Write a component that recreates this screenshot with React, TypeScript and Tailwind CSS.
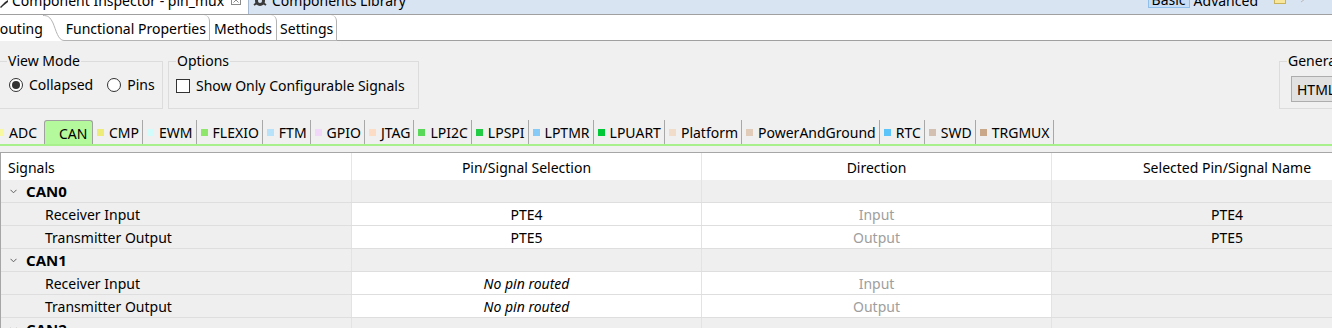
import React from "react";

type PeriphTab = { name: string; sq: string };

const periphTabs: PeriphTab[] = [
  { name: "CMP", sq: "bg-[#eeec78]" },
  { name: "EWM", sq: "bg-[#d2fcfc]" },
  { name: "FLEXIO", sq: "bg-[#8ee66a]" },
  { name: "FTM", sq: "bg-[#b8e2fa]" },
  { name: "GPIO", sq: "bg-[#f2d8f8]" },
  { name: "JTAG", sq: "bg-[#fcdcc4]" },
  { name: "LPI2C", sq: "bg-[#5ad85a]" },
  { name: "LPSPI", sq: "bg-[#22cc44]" },
  { name: "LPTMR", sq: "bg-[#86cbf7]" },
  { name: "LPUART", sq: "bg-[#00c837]" },
  { name: "Platform", sq: "bg-[#f0dcc8]" },
  { name: "PowerAndGround", sq: "bg-[#e0ccb8]" },
  { name: "RTC", sq: "bg-[#5cc4f8]" },
  { name: "SWD", sq: "bg-[#d4c0b0]" },
  { name: "TRGMUX", sq: "bg-[#c8a888]" },
];

type Row =
  | { kind: "group"; name: string }
  | { kind: "item"; signal: string; pin: string; routed: boolean; dir: string; sel: string };

const rows: Row[] = [
  { kind: "group", name: "CAN0" },
  { kind: "item", signal: "Receiver Input", pin: "PTE4", routed: true, dir: "Input", sel: "PTE4" },
  { kind: "item", signal: "Transmitter Output", pin: "PTE5", routed: true, dir: "Output", sel: "PTE5" },
  { kind: "group", name: "CAN1" },
  { kind: "item", signal: "Receiver Input", pin: "No pin routed", routed: false, dir: "Input", sel: "" },
  { kind: "item", signal: "Transmitter Output", pin: "No pin routed", routed: false, dir: "Output", sel: "" },
  { kind: "group", name: "CAN2" },
];

function TopStrip() {
  return (
    <div className="h-[15px] flex overflow-hidden border-b border-[#a0a0a0] bg-[#d9e4f2]">
      {/* active editor tab */}
      <div className="w-[249px] shrink-0 flex items-start bg-white border-r border-[#a7b9d1]">
        <svg width="9" height="14" viewBox="0 0 9 14" className="shrink-0">
          <path d="M0 7 L5 2 L8 0 L8 2 L3 6 L1 8 Z" fill="#2b2b2b" />
        </svg>
        <span className="ml-[3px] -mt-[6px] leading-[14px] whitespace-nowrap">
          Component Inspector - pin_mux
        </span>
        <svg width="10" height="10" viewBox="0 0 10 10" className="ml-auto mr-[7px] -mt-[5px] shrink-0">
          <rect x="0.5" y="0.5" width="9" height="9" fill="none" stroke="#8a8a8a" />
          <path d="M2.5 2.5 L7.5 7.5 M7.5 2.5 L2.5 7.5" stroke="#8a8a8a" />
        </svg>
      </div>

      {/* second view */}
      <div className="flex items-start pl-[4px]">
        <svg width="14" height="14" viewBox="0 0 14 14" className="-mt-[6px] shrink-0">
          <circle cx="7" cy="7" r="5" fill="#3a3a3a" />
          <circle cx="7" cy="7" r="2" fill="#d9e4f2" />
          <path d="M1 11 L4 9 M13 11 L10 9" stroke="#3a3a3a" strokeWidth="2" />
        </svg>
        <span className="ml-[5px] -mt-[6px] leading-[14px] whitespace-nowrap">Components Library</span>
      </div>

      {/* right toolbar */}
      <div className="ml-auto flex items-start pr-[26px]">
        <div className="-mt-[8px] h-[16px] px-[3px] border border-[#90bfec] bg-[#c7def6] leading-[14px]">
          Basic
        </div>
        <span className="ml-[4px] -mt-[6px] leading-[14px] whitespace-nowrap">Advanced</span>
        <div className="ml-[16px] -mt-[6px] w-[12px] h-[10px] border border-[#c9b35a] bg-[#f8e69c]" />
        <svg width="6" height="6" viewBox="0 0 6 6" className="ml-[14px] -mt-[1px] shrink-0">
          <path d="M5 0 L1 3" stroke="#b8b8b8" />
        </svg>
      </div>
    </div>
  );
}

function EditorTabs() {
  return (
    <div className="h-[26px] bg-white flex overflow-hidden">
      <div className="flex shrink-0">
        <span className="-ml-[9px] pt-[3px] leading-[22px] whitespace-nowrap">Routing</span>
        <svg width="21" height="26" viewBox="0 0 21 26" className="shrink-0">
          <path d="M0 0.5 C5 0.5 7 2 10 8 C13 15 15 25.5 21 25.5" stroke="#b4b4b4" fill="none" />
        </svg>
      </div>
      <div className="shrink-0 pl-[2px] pr-[3px] pt-[3px] leading-[22px] border-r border-b border-[#b4b4b4] rounded-tr-[6px] whitespace-nowrap">
        Functional Properties
      </div>
      <div className="shrink-0 pl-[4px] pr-[4px] pt-[3px] leading-[22px] border-r border-b border-[#b4b4b4] rounded-tr-[6px] whitespace-nowrap">
        Methods
      </div>
      <div className="shrink-0 pl-[3px] pr-[3px] pt-[3px] leading-[22px] border-r border-b border-[#b4b4b4] rounded-tr-[6px] whitespace-nowrap">
        Settings
      </div>
      <div className="flex-1 border-b border-[#a0a0a0]" />
    </div>
  );
}

function OptionsArea() {
  return (
    <div className="h-[79px] flex items-start pt-[10px] overflow-hidden">
      {/* View Mode */}
      <fieldset className="-ml-px w-[164px] h-[58px] shrink-0 border border-[#dcdcdc] pl-[9px]">
        <legend className="-ml-[2px] px-[1px] leading-[20px]">View Mode</legend>
        <div className="flex items-center h-[14px] mt-[7px] whitespace-nowrap">
          <span className="w-[14px] h-[14px] rounded-full border border-[#333] bg-white flex items-center justify-center shrink-0">
            <span className="w-[8px] h-[8px] rounded-full bg-[#333]" />
          </span>
          <span className="ml-[6px] leading-[14px]">Collapsed</span>
          <span className="ml-[14px] w-[14px] h-[14px] rounded-full border border-[#333] bg-white shrink-0" />
          <span className="ml-[6px] leading-[14px]">Pins</span>
        </div>
      </fieldset>

      {/* Options */}
      <fieldset className="ml-[5px] w-[251px] h-[58px] shrink-0 border border-[#dcdcdc] pl-[7px]">
        <legend className="px-[1px] leading-[20px]">Options</legend>
        <div className="flex items-center h-[14px] mt-[8px] whitespace-nowrap">
          <span className="w-[14px] h-[14px] border border-[#333] bg-white shrink-0" />
          <span className="ml-[6px] leading-[14px]">Show Only Configurable Signals</span>
        </div>
      </fieldset>

      {/* Generate */}
      <fieldset className="ml-[860px] w-[140px] h-[58px] shrink-0 border border-[#dcdcdc] pl-[11px]">
        <legend className="-ml-[4px] px-[1px] leading-[20px] whitespace-nowrap">Generate</legend>
        <div className="mt-[5px] h-[26px] w-[110px] border border-[#adadad] bg-[#e1e1e1] pl-[5px] flex items-center whitespace-nowrap">
          HTML Report
        </div>
      </fieldset>
    </div>
  );
}

function PeripheralTabs() {
  return (
    <div className="overflow-hidden">
      <div className="h-[24px] flex items-stretch -ml-[7px] whitespace-nowrap">
        <div className="shrink-0 flex items-center pl-[4px] pr-[7px] gap-[5px] pt-[1px]">
          <span className="w-[7px] h-[7px] bg-[#f8f8a0]" />
          <span>ADC</span>
        </div>
        <div className="shrink-0 w-[49px] flex items-center pl-[14px] pt-[1px] border border-b-0 border-[#a0a0a0] rounded-t-[3px] bg-[#b4f99c]">
          CAN
        </div>
        {periphTabs.map((t) => (
          <div
            key={t.name}
            className="shrink-0 flex items-center pl-[4px] pr-[3px] gap-[5px] pt-[1px] border-r border-[#a8a8a8]"
          >
            <span className={`w-[7px] h-[7px] ${t.sq}`} />
            <span>{t.name}</span>
          </div>
        ))}
      </div>
      <div className="h-[2px] bg-[#a8f08c]" />
      <div className="h-[6px]" />
    </div>
  );
}

function Chevron() {
  return (
    <svg width="7" height="5" viewBox="0 0 7 5" className="shrink-0">
      <path d="M0.5 0.8 L3.5 3.8 L6.5 0.8" stroke="#606060" fill="none" />
    </svg>
  );
}

function SignalTable() {
  return (
    <div className="border-t border-l border-[#a6a6a6] bg-white overflow-hidden">
      <div className="h-[27px] flex whitespace-nowrap">
        <div className="w-[351px] shrink-0 border-r border-[#e6e6e6] pl-[7px] pt-[2px] flex items-center">
          Signals
        </div>
        <div className="w-[350px] shrink-0 border-r border-[#e6e6e6] pt-[2px] flex items-center justify-center">
          Pin/Signal Selection
        </div>
        <div className="w-[350px] shrink-0 border-r border-[#e6e6e6] pt-[2px] flex items-center justify-center">
          Direction
        </div>
        <div className="w-[350px] shrink-0 pt-[2px] flex items-center justify-center">
          Selected Pin/Signal Name
        </div>
      </div>

      {rows.map((r, i) =>
        r.kind === "group" ? (
          <div key={i} className="h-[23px] flex border-b border-[#dedede] bg-[#efefef] whitespace-nowrap">
            <div className="w-[351px] shrink-0 border-r border-[#e3e3e3] pl-[9px] flex items-center">
              <Chevron />
              <span className="ml-[9px] font-bold text-[15px]">{r.name}</span>
            </div>
            <div className="w-[350px] shrink-0 border-r border-[#e3e3e3]" />
            <div className="w-[350px] shrink-0 border-r border-[#e3e3e3]" />
            <div className="w-[350px] shrink-0" />
          </div>
        ) : (
          <div key={i} className="h-[23px] flex border-b border-[#dedede] whitespace-nowrap">
            <div className="w-[351px] shrink-0 border-r border-[#e3e3e3] bg-[#efefef] pl-[44px] flex items-center">
              {r.signal}
            </div>
            <div
              className={`w-[350px] shrink-0 border-r border-[#e3e3e3] bg-white flex items-center justify-center ${
                r.routed ? "" : "italic"
              }`}
            >
              {r.pin}
            </div>
            <div className="w-[350px] shrink-0 border-r border-[#e3e3e3] bg-white flex items-center justify-center text-[#9e9e9e]">
              {r.dir}
            </div>
            <div className="w-[350px] shrink-0 bg-[#efefef] flex items-center justify-center">{r.sel}</div>
          </div>
        )
      )}
    </div>
  );
}

export default function App() {
  return (
    <div className="w-[1332px] h-[328px] overflow-hidden bg-[#f0f0f0] font-['Noto_Sans',sans-serif] text-[14px] text-black">
      <TopStrip />
      <EditorTabs />
      <OptionsArea />
      <PeripheralTabs />
      <SignalTable />
    </div>
  );
}
